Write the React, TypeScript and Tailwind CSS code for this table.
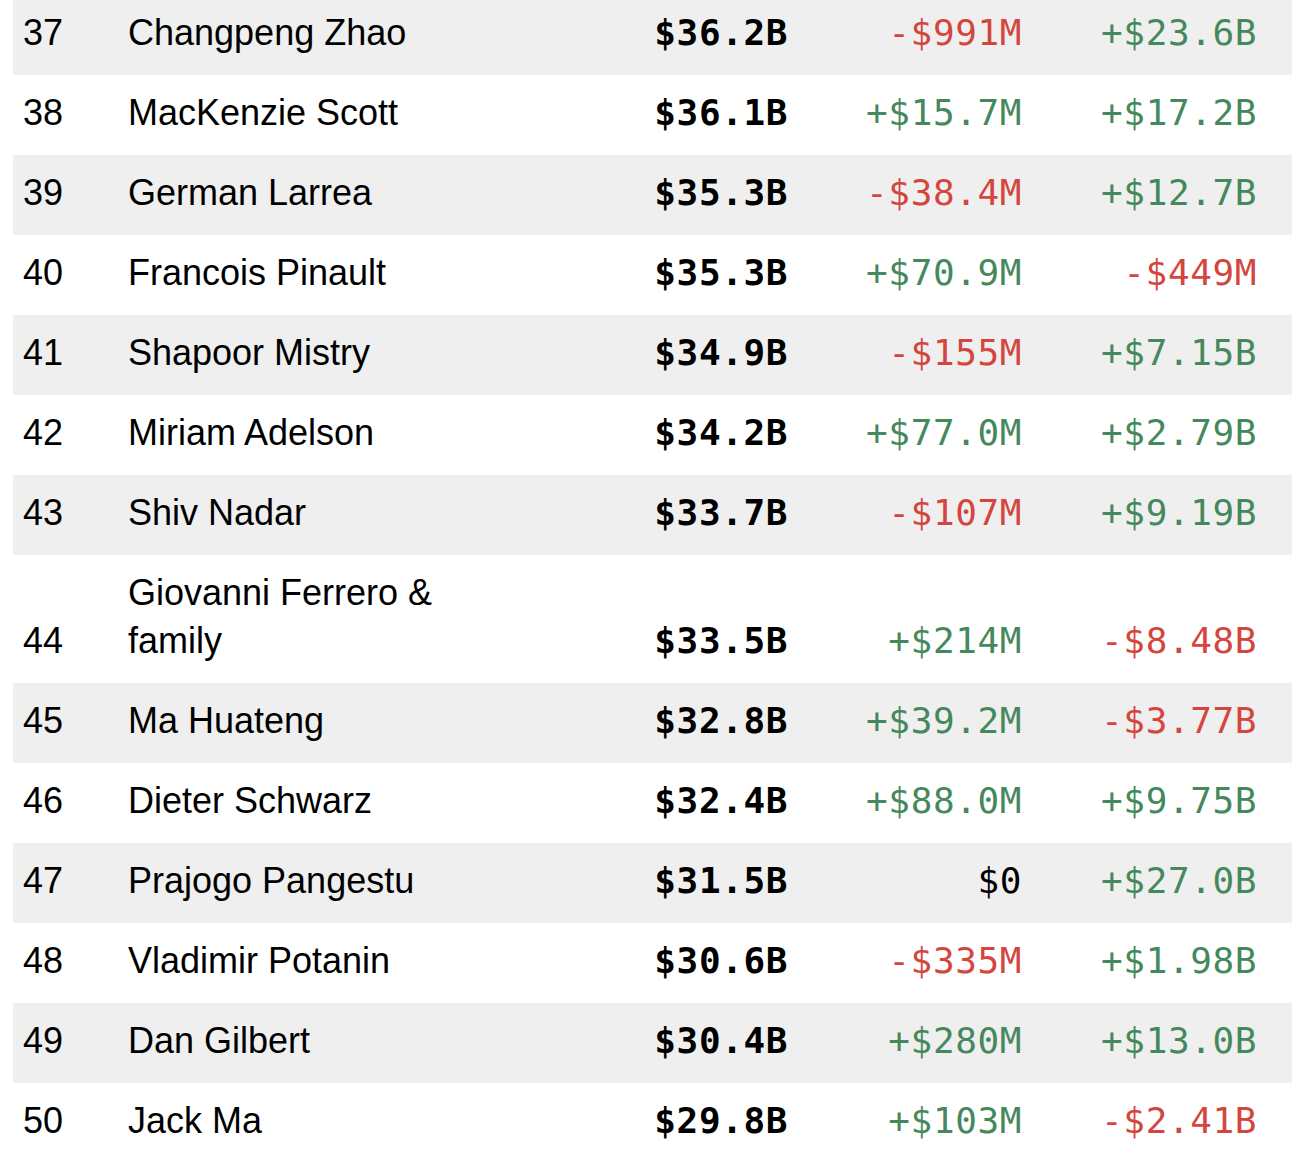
const rows = [
  { rank: 37, name: 'Changpeng Zhao', worth: '$36.2B', change: '-$991M', ytd: '+$23.6B' },
  { rank: 38, name: 'MacKenzie Scott', worth: '$36.1B', change: '+$15.7M', ytd: '+$17.2B' },
  { rank: 39, name: 'German Larrea', worth: '$35.3B', change: '-$38.4M', ytd: '+$12.7B' },
  { rank: 40, name: 'Francois Pinault', worth: '$35.3B', change: '+$70.9M', ytd: '-$449M' },
  { rank: 41, name: 'Shapoor Mistry', worth: '$34.9B', change: '-$155M', ytd: '+$7.15B' },
  { rank: 42, name: 'Miriam Adelson', worth: '$34.2B', change: '+$77.0M', ytd: '+$2.79B' },
  { rank: 43, name: 'Shiv Nadar', worth: '$33.7B', change: '-$107M', ytd: '+$9.19B' },
  { rank: 44, name: 'Giovanni Ferrero & family', worth: '$33.5B', change: '+$214M', ytd: '-$8.48B' },
  { rank: 45, name: 'Ma Huateng', worth: '$32.8B', change: '+$39.2M', ytd: '-$3.77B' },
  { rank: 46, name: 'Dieter Schwarz', worth: '$32.4B', change: '+$88.0M', ytd: '+$9.75B' },
  { rank: 47, name: 'Prajogo Pangestu', worth: '$31.5B', change: '$0', ytd: '+$27.0B' },
  { rank: 48, name: 'Vladimir Potanin', worth: '$30.6B', change: '-$335M', ytd: '+$1.98B' },
  { rank: 49, name: 'Dan Gilbert', worth: '$30.4B', change: '+$280M', ytd: '+$13.0B' },
  { rank: 50, name: 'Jack Ma', worth: '$29.8B', change: '+$103M', ytd: '-$2.41B' },
]

function tone(v: string) {
  if (v.startsWith('+')) return 'text-[#45885c]'
  if (v.startsWith('-')) return 'text-[#d4453d]'
  return 'text-black'
}

export default function App() {
  return (
    <div className="w-[1292px] h-[1162px] overflow-hidden bg-white">
      <table className="ml-[13px] -mt-[5px] w-[1279px] table-fixed border-collapse text-[36px] leading-[48px] text-black font-['Liberation_Sans',Arial,sans-serif]">
        <tbody>
          {rows.map((r, i) => (
            <tr key={r.rank} className={i % 2 === 0 ? 'bg-[#efefef]' : 'bg-white'}>
              <td className="w-[115px] pl-[10px] pt-[14px] pb-[18px] align-bottom">{r.rank}</td>
              <td className="w-[340px] pt-[14px] pb-[18px] align-bottom">{r.name}</td>
              <td className="w-[320px] pt-[14px] pb-[18px] align-bottom text-right font-bold font-['DejaVu_Sans_Mono',monospace] tracking-[0.6px]">
                {r.worth}
              </td>
              <td
                className={`w-[234px] pt-[14px] pb-[18px] align-bottom text-right font-['DejaVu_Sans_Mono',monospace] tracking-[0.6px] ${tone(r.change)}`}
              >
                {r.change}
              </td>
              <td
                className={`w-[270px] pr-[35px] pt-[14px] pb-[18px] align-bottom text-right font-['DejaVu_Sans_Mono',monospace] tracking-[0.6px] ${tone(r.ytd)}`}
              >
                {r.ytd}
              </td>
            </tr>
          ))}
        </tbody>
      </table>
    </div>
  )
}
